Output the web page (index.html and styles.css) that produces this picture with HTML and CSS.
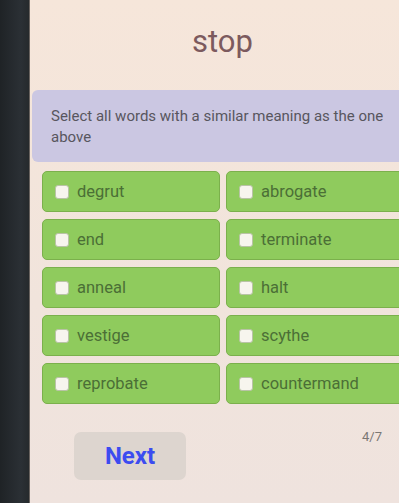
FILE: index.html
```html
<!DOCTYPE html>
<html>
<head>
<meta charset="utf-8">
<link rel="stylesheet" href="styles.css">
</head>
<body>
<div class="bezel"></div>
<main class="screen">
  <h1 class="word">stop</h1>
  <div class="prompt">Select all words with a similar meaning as the one above</div>
  <div class="options">
    <div class="opt"><span class="box"></span>degrut</div>
    <div class="opt"><span class="box"></span>abrogate</div>
    <div class="opt"><span class="box"></span>end</div>
    <div class="opt"><span class="box"></span>terminate</div>
    <div class="opt"><span class="box"></span>anneal</div>
    <div class="opt"><span class="box"></span>halt</div>
    <div class="opt"><span class="box"></span>vestige</div>
    <div class="opt"><span class="box"></span>scythe</div>
    <div class="opt"><span class="box"></span>reprobate</div>
    <div class="opt"><span class="box"></span>countermand</div>
  </div>
  <div class="footer">
    <button class="next">Next</button>
    <span class="count">4/7</span>
  </div>
</main>
</body>
</html>
```
FILE: styles.css
```css
html, body {
  margin: 0;
  padding: 0;
  height: 100%;
  overflow: hidden;
}
body {
  display: flex;
  background: #f2e5dc;
  font-family: Roboto, "Liberation Sans", sans-serif;
}
.bezel {
  width: 30px;
  flex: none;
  background: linear-gradient(90deg, #1f2326 0%, #2b3035 70%, #262a2d 95%, #8a7f78 100%);
}
.screen {
  flex: 1;
  min-width: 0;
  display: flex;
  flex-direction: column;
  background: linear-gradient(180deg, #f6e6da 0%, #f1e4dc 60%, #efe3de 100%);
}
.word {
  margin: 0;
  height: 90px;
  box-sizing: border-box;
  padding: 23px 0 0 16px;
  text-align: center;
  font-weight: 400;
  font-size: 31px;
  color: #7c5a5e;
}
.prompt {
  margin-left: 2px;
  height: 72px;
  box-sizing: border-box;
  padding: 16px 2px 0 19px;
  background: #cbc7e2;
  border-radius: 6px 0 0 6px;
  font-size: 15px;
  line-height: 21px;
  color: #58565e;
}
.options {
  margin: 9px 0 0 12px;
  display: grid;
  grid-template-columns: 178px 178px;
  grid-auto-rows: 41px;
  gap: 7px 6px;
}
.opt {
  display: flex;
  align-items: center;
  gap: 8px;
  padding-left: 12px;
  background: #8fcb5d;
  border: 1px solid #7bb04c;
  border-radius: 5px;
  font-size: 16.5px;
  color: #4b6f36;
}
.box {
  width: 12px;
  height: 12px;
  background: #f7f5ee;
  border: 1px solid #b9c3a6;
  border-radius: 3px;
}
.footer {
  margin-top: 25px;
  display: flex;
  align-items: flex-start;
  padding-left: 44px;
}
.next {
  width: 112px;
  height: 48px;
  background: #ddd5cf;
  border: none;
  border-radius: 7px;
  font-family: Roboto, "Liberation Sans", sans-serif;
  font-weight: 700;
  font-size: 24px;
  color: #3c4cf0;
  padding: 0;
  margin-top: 3px;
}
.count {
  margin-left: 176px;
  font-size: 13px;
  color: #7a7774;
}
```
